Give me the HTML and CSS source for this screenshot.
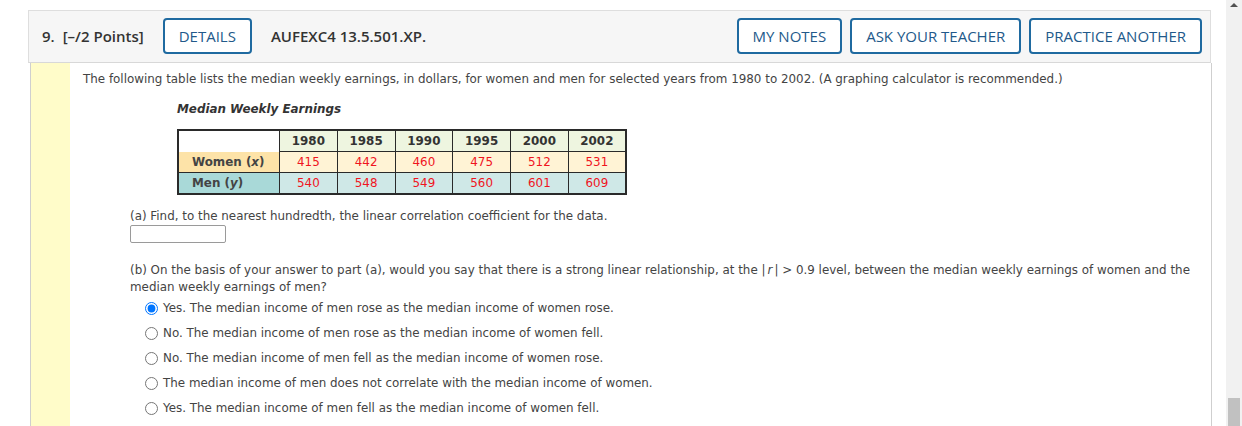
FILE: index.html
```html
<!DOCTYPE html>
<html>
<head>
<meta charset="utf-8">
<link rel="stylesheet" href="styles.css">
</head>
<body>
<div class="page">
  <div class="qhead">
    <span class="qnum">9.</span>
    <span class="qpts">[–/2 Points]</span>
    <button class="btn">DETAILS</button>
    <span class="qcode">AUFEXC4 13.5.501.XP.</span>
    <div class="spacer"></div>
    <button class="btn">MY NOTES</button>
    <button class="btn">ASK YOUR TEACHER</button>
    <button class="btn">PRACTICE ANOTHER</button>
  </div>
  <div class="qbody">
    <div class="strip"></div>
    <div class="content">
      <p class="intro">The following table lists the median weekly earnings, in dollars, for women and men for selected years from 1980 to 2002. (A graphing calculator is recommended.)</p>
      <p class="ttitle">Median Weekly Earnings</p>
      <table class="data">
        <tr class="yrs"><th class="blank"></th><th>1980</th><th>1985</th><th>1990</th><th>1995</th><th>2000</th><th>2002</th></tr>
        <tr class="women"><th class="lbl">Women (<i>x</i>)</th><td>415</td><td>442</td><td>460</td><td>475</td><td>512</td><td>531</td></tr>
        <tr class="men"><th class="lbl">Men (<i>y</i>)</th><td>540</td><td>548</td><td>549</td><td>560</td><td>601</td><td>609</td></tr>
      </table>
      <div class="part">
        <p class="ptext">(a) Find, to the nearest hundredth, the linear correlation coefficient for the data.</p>
        <input class="answer" type="text">
      </div>
      <div class="part partb">
        <p class="ptext">(b) On the basis of your answer to part (a), would you say that there is a strong linear relationship, at the |<i class="r">r</i>| &gt; 0.9 level, between the median weekly earnings of women and the median weekly earnings of men?</p>
        <ul class="opts">
          <li><input type="radio" name="b" checked><span>Yes. The median income of men rose as the median income of women rose.</span></li>
          <li><input type="radio" name="b"><span>No. The median income of men rose as the median income of women fell.</span></li>
          <li><input type="radio" name="b"><span>No. The median income of men fell as the median income of women rose.</span></li>
          <li><input type="radio" name="b"><span>The median income of men does not correlate with the median income of women.</span></li>
          <li><input type="radio" name="b"><span>Yes. The median income of men fell as the median income of women fell.</span></li>
        </ul>
      </div>
    </div>
  </div>
</div>
<div class="scrollbar"><div class="arrow"></div><div class="thumb"></div></div>
</body>
</html>
```
FILE: styles.css
```css
html, body { margin: 0; padding: 0; overflow: hidden; background: #fff; }
body { width: 1242px; height: 426px; position: relative; }
.page { padding: 10px 0 0 28px; }
.qhead {
  width: 1183px; height: 53px; box-sizing: border-box;
  background: #f6f6f6; border: 1px solid #dedede; border-bottom-color: #d8d8d8;
  display: flex; align-items: center; padding: 0 8px 2px 13px;
  font-family: "Open Sans", sans-serif; font-size: 15px; color: #333;
}
.qnum { font-weight: 600; margin-right: 8px; }
.qpts { font-weight: 600; margin-right: 19px; }
.qcode { font-weight: 600; margin-left: 19px; }
.spacer { flex: 1; }
.btn {
  height: 36px; box-sizing: border-box; padding: 0 14px; margin-left: 8px;
  background: #fff; border: 2px solid #1f6aa0; border-radius: 4px;
  font-family: "Open Sans", sans-serif; font-size: 15px; color: #22598a; font-weight: 500;
}
.qhead .btn:first-of-type { margin-left: 0; }
.qbody {
  margin-left: 2px; width: 1182px; box-sizing: border-box; height: 363px;
  display: flex; border-left: 1px solid #cfcfcf; border-right: 1px solid #cfcfcf;
}
.strip { width: 39px; background: #fffcc9; }
.content {
  flex: 1; padding: 8px 0 0 13px;
  font-family: "DejaVu Sans", Verdana, sans-serif; font-size: 11.9px; color: #444; line-height: 17px;
}
p { margin: 0; }
.r { margin: 0 2px; }
.ttitle { margin: 13px 0 0 94px; font-weight: bold; font-style: italic; color: #333; }
.data {
  margin: 11px 0 0 94px; border-collapse: collapse; border: 2px solid #2a2a2a;
  width: 450px; table-layout: fixed;
}
.data th, .data td { border: 1px solid #2a2a2a; height: 20px; padding: 0; text-align: center; font-size: 11.9px; line-height: 20px; }
.data .blank { width: 100px; background: #fff; border-bottom: none; }
.yrs th { background: #eef5e0; color: #333; }
.data .lbl { text-align: left; padding-left: 13px; color: #444; }
.women .lbl { background: #fde3a8; border-top: none; }
.women td { background: #fff3d5; color: #f0141e; }
.men .lbl { background: #a9d9d8; }
.men td { background: #cfe8e7; color: #f0141e; }
.part { margin: 13px 0 0 47px; }
.answer {
  display: block; margin: 0; width: 96px; height: 18px; box-sizing: border-box;
  border: 1px solid #9a9a9a; border-radius: 2px; padding: 0;
}
.partb { margin-top: 19px; }
.opts { list-style: none; margin: 0; padding: 0 0 0 14px; }
.opts li { height: 25px; display: flex; align-items: center; }
.opts input { width: 13px; height: 13px; margin: 0 5px 0 1px; }
.scrollbar { position: absolute; top: 0; right: 0; width: 16px; height: 426px; background: #f1f1f1; }
.arrow {
  position: absolute; top: 3px; left: 4px; width: 0; height: 0;
  border-left: 4px solid transparent; border-right: 4px solid transparent; border-bottom: 4px solid #505050;
}
.thumb { position: absolute; left: 2px; width: 12px; top: 398px; bottom: 0; background: #c1c1c1; }
```
